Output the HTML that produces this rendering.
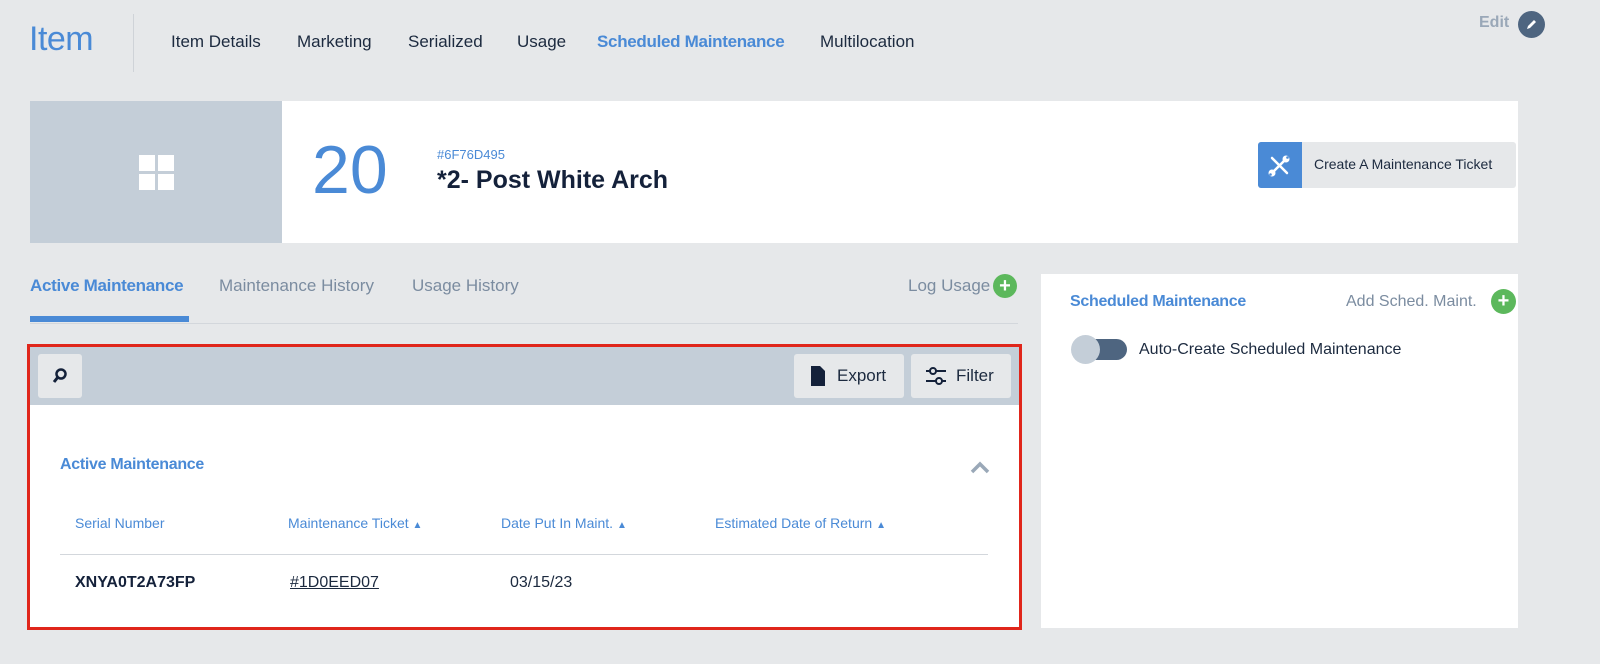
<!DOCTYPE html>
<html><head><meta charset="utf-8"><style>
*{margin:0;padding:0;box-sizing:border-box}
body{width:1600px;height:664px;background:#e6e8ea;font-family:"Liberation Sans",sans-serif;position:relative;overflow:hidden;color:#1c2a3f}
.a{position:absolute;white-space:nowrap}
.blue{color:#4a8ad6}
</style></head><body>
<div class="a blue" style="left:29px;top:20px;font-size:34px;letter-spacing:-0.5px">Item</div>
<div class="a" style="left:133px;top:14px;width:1px;height:58px;background:#cfd3d8"></div>
<div class="a" style="left:171px;top:32px;font-size:17px">Item Details</div>
<div class="a" style="left:297px;top:32px;font-size:17px">Marketing</div>
<div class="a" style="left:408px;top:32px;font-size:17px">Serialized</div>
<div class="a" style="left:517px;top:32px;font-size:17px">Usage</div>
<div class="a blue" style="left:597px;top:32px;font-size:17px;font-weight:bold;letter-spacing:-0.3px">Scheduled Maintenance</div>
<div class="a" style="left:820px;top:32px;font-size:17px">Multilocation</div>
<div class="a" style="left:1479px;top:14px;font-size:16px;font-weight:bold;color:#9aa8b8">Edit</div>
<div class="a" style="left:1518px;top:11px;width:27px;height:27px;border-radius:50%;background:#4e6580"><svg width="27" height="27" viewBox="0 0 27 27"><path d="M9 18l1-3 6-6 2 2-6 6z" fill="#fff"/></svg></div>

<div class="a" style="left:30px;top:101px;width:1488px;height:142px;background:#fff"></div>
<div class="a" style="left:30px;top:101px;width:252px;height:142px;background:#c4ced8"></div>
<div class="a" style="left:139px;top:155px;width:16px;height:16px;background:#fff"></div>
<div class="a" style="left:158px;top:155px;width:16px;height:16px;background:#fff"></div>
<div class="a" style="left:139px;top:174px;width:16px;height:16px;background:#fff"></div>
<div class="a" style="left:158px;top:174px;width:16px;height:16px;background:#fff"></div>
<div class="a blue" style="left:312px;top:132px;font-size:68px;line-height:76px">20</div>
<div class="a blue" style="left:437px;top:147px;font-size:13px">#6F76D495</div>
<div class="a" style="left:437px;top:166px;font-size:25px;font-weight:bold;color:#14213a">*2- Post White Arch</div>
<div class="a" style="left:1258px;top:142px;width:258px;height:46px;background:#e6e8ea;border-radius:3px"></div>
<div class="a" style="left:1258px;top:142px;width:44px;height:46px;background:#4a8ad6;border-radius:3px 0 0 3px"><svg width="44" height="46" viewBox="0 0 44 46"><path d="M14 16l15 15M29 16L15 30" stroke="#fff" stroke-width="2.5" stroke-linecap="round"/><circle cx="28" cy="17" r="3.5" fill="#fff"/><circle cx="14" cy="31" r="3.5" fill="#fff"/><circle cx="29.5" cy="15.5" r="1.3" fill="#4a8ad6"/><circle cx="12.5" cy="32.5" r="1.3" fill="#4a8ad6"/></svg></div>
<div class="a" style="left:1314px;top:156px;font-size:14px">Create A Maintenance Ticket</div>

<div class="a blue" style="left:30px;top:276px;font-size:17px;font-weight:bold;letter-spacing:-0.3px">Active Maintenance</div>
<div class="a" style="left:219px;top:276px;font-size:17px;color:#7b8ca0">Maintenance History</div>
<div class="a" style="left:412px;top:276px;font-size:17px;color:#7b8ca0">Usage History</div>
<div class="a" style="left:908px;top:276px;font-size:17px;color:#7b8ca0">Log Usage</div>
<div class="a" style="left:993px;top:274px;width:24px;height:24px;border-radius:50%;background:#5cb85c;color:#fff;font-weight:bold;font-size:20px;line-height:24px;text-align:center">+</div>
<div class="a" style="left:30px;top:323px;width:988px;height:1px;background:#d3d7dc"></div>
<div class="a" style="left:30px;top:316px;width:159px;height:6px;background:#4a8ad6"></div>

<div class="a" style="left:1041px;top:274px;width:477px;height:354px;background:#fff"></div>
<div class="a blue" style="left:1070px;top:293px;font-size:16px;font-weight:bold;letter-spacing:-0.3px">Scheduled Maintenance</div>
<div class="a" style="left:1346px;top:293px;font-size:16px;color:#7b8ca0">Add Sched. Maint.</div>
<div class="a" style="left:1491px;top:289px;width:25px;height:25px;border-radius:50%;background:#5cb85c;color:#fff;font-weight:bold;font-size:20px;line-height:25px;text-align:center">+</div>
<div class="a" style="left:1084px;top:339px;width:43px;height:21px;border-radius:11px;background:#4e6580"></div>
<div class="a" style="left:1071px;top:335px;width:29px;height:29px;border-radius:50%;background:#c4ced8"></div>
<div class="a" style="left:1139px;top:341px;font-size:16px">Auto-Create Scheduled Maintenance</div>

<div class="a" style="left:27px;top:344px;width:995px;height:286px;border:3px solid #e0261b;background:#fff"></div>
<div class="a" style="left:30px;top:347px;width:989px;height:58px;background:#c4ced8"></div>
<div class="a" style="left:38px;top:354px;width:44px;height:44px;background:#e6e8ea;border-radius:3px"><svg width="44" height="44"><circle cx="23" cy="20" r="4.5" stroke="#14213a" stroke-width="2.5" fill="none"/><path d="M20 23l-4 5" stroke="#14213a" stroke-width="3"/></svg></div>
<div class="a" style="left:794px;top:354px;width:110px;height:44px;background:#e6e8ea;border-radius:3px"><svg class="a" style="left:16px;top:12px" width="16" height="20"><path d="M1 0h9l5 5v15H1z" fill="#14213a"/></svg><span class="a" style="left:43px;top:12px;font-size:17px">Export</span></div>
<div class="a" style="left:911px;top:354px;width:100px;height:44px;background:#e6e8ea;border-radius:3px"><svg class="a" style="left:14px;top:12px" width="22" height="20"><path d="M1 5h20M1 15h20" stroke="#14213a" stroke-width="2"/><circle cx="8" cy="5" r="3" fill="#e6e8ea" stroke="#14213a" stroke-width="2"/><circle cx="14" cy="15" r="3" fill="#e6e8ea" stroke="#14213a" stroke-width="2"/></svg><span class="a" style="left:45px;top:12px;font-size:17px">Filter</span></div>

<div class="a blue" style="left:60px;top:456px;font-size:16px;font-weight:bold;letter-spacing:-0.3px">Active Maintenance</div>
<svg class="a" style="left:970px;top:460px" width="20" height="14"><path d="M2 12l8-8 8 8" stroke="#9aa8b8" stroke-width="3.5" fill="none"/></svg>
<div class="a blue" style="left:75px;top:515px;font-size:14px">Serial Number</div>
<div class="a blue" style="left:288px;top:515px;font-size:14px">Maintenance Ticket <span style="font-size:10px">▲</span></div>
<div class="a blue" style="left:501px;top:515px;font-size:14px">Date Put In Maint. <span style="font-size:10px">▲</span></div>
<div class="a blue" style="left:715px;top:515px;font-size:14px">Estimated Date of Return <span style="font-size:10px">▲</span></div>
<div class="a" style="left:60px;top:554px;width:928px;height:1px;background:#d3d7dc"></div>
<div class="a" style="left:75px;top:574px;font-size:16px;font-weight:bold;color:#14213a">XNYA0T2A73FP</div>
<div class="a" style="left:290px;top:574px;font-size:16px;text-decoration:underline">#1D0EED07</div>
<div class="a" style="left:510px;top:574px;font-size:16px">03/15/23</div>
</body></html>
